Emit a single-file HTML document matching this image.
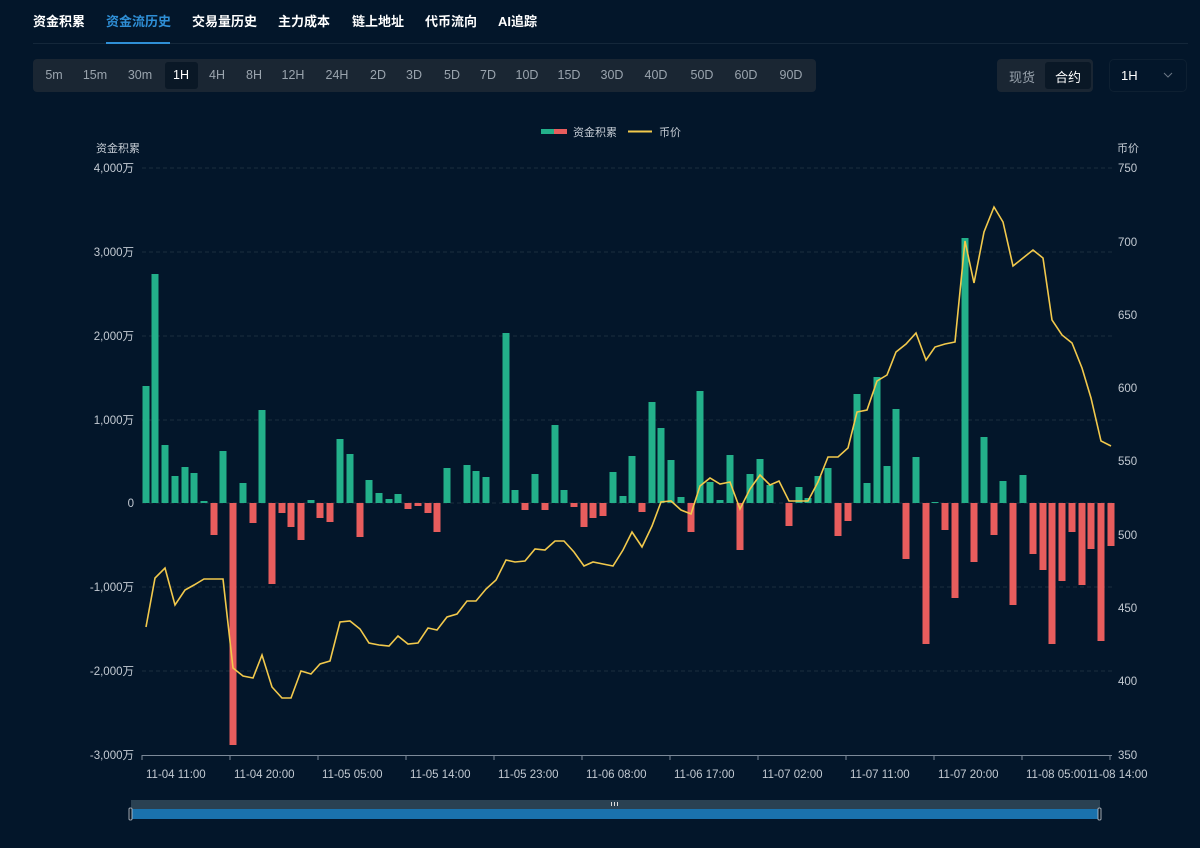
<!DOCTYPE html><html><head><meta charset="utf-8"><style>
body{margin:0;width:1200px;height:848px;background:#03162a;font-family:"Liberation Sans","Noto Sans CJK SC",sans-serif;overflow:hidden;position:relative;color:#c9d1d9}
.a{position:absolute;white-space:nowrap}
.tab{top:11px;font-size:13px;font-weight:bold;color:#fff}
.tf{top:68px;font-size:12.5px;color:#9aa4ae;transform:translateX(-50%)}
</style></head><body>
<div class="a tab" style="left:33px">资金积累</div>
<div class="a tab" style="left:106px;color:#2f8fd6">资金流历史</div>
<div class="a tab" style="left:192px">交易量历史</div>
<div class="a tab" style="left:278px">主力成本</div>
<div class="a tab" style="left:352px">链上地址</div>
<div class="a tab" style="left:425px">代币流向</div>
<div class="a tab" style="left:498px">AI追踪</div>
<div class="a" style="left:33px;top:43px;width:1155px;height:1px;background:#14273a"></div>
<div class="a" style="left:106px;top:42px;width:64px;height:2px;background:#2f8fd6"></div>
<div class="a" style="left:33px;top:59px;width:783px;height:33px;background:#1a2633;border-radius:4px"></div>
<div class="a" style="left:165px;top:62px;width:33px;height:27px;background:#0a1826;border-radius:3px"></div>
<div id="tfs"></div>
<div class="a" style="left:997px;top:59px;width:96px;height:33px;background:#1a2633;border-radius:4px"></div>
<div class="a" style="left:1045px;top:62px;width:46px;height:27px;background:#0a1826;border-radius:3px"></div>
<div class="a" style="left:1009px;top:67px;font-size:13px;color:#9aa4ae">现货</div>
<div class="a" style="left:1055px;top:67px;font-size:13px;color:#fff">合约</div>
<div class="a" style="left:1109px;top:59px;width:78px;height:33px;border:1px solid #0e2032;border-radius:5px;box-sizing:border-box"></div>
<div class="a" style="left:1121px;top:68px;font-size:13px;color:#fff">1H</div>
<svg class="a" style="left:1163px;top:72px" width="10" height="6"><path d="M1 1L5 5L9 1" stroke="#6b7785" fill="none"/></svg>
<svg id="c" class="a" style="left:0;top:0" width="1200" height="848"></svg>
<script>
var tf=[["5m",54],["15m",95],["30m",140],["1H",181],["4H",217],["8H",254],["12H",293],["24H",337],["2D",378],["3D",414],["5D",452],["7D",488],["10D",527],["15D",569],["30D",612],["40D",656],["50D",702],["60D",746],["90D",791]];
var h="";tf.forEach(function(t){h+='<div class="a tf" style="left:'+t[1]+'px;'+(t[0]=="1H"?'color:#fff':'')+'">'+t[0]+'</div>'});
document.getElementById("tfs").innerHTML=h;
var s="";
var ly=[[168,"4,000万"],[252,"3,000万"],[336,"2,000万"],[420,"1,000万"],[503,"0"],[587,"-1,000万"],[671,"-2,000万"],[755,"-3,000万"]];
var ry=[[168,750],[242,700],[315,650],[388,600],[461,550],[535,500],[608,450],[681,400],[755,350]];
ly.forEach(function(l){if(l[0]!=755)s+='<line x1="142" x2="1112" y1="'+l[0]+'" y2="'+l[0]+'" stroke="#1b2d3e" stroke-dasharray="4,3"/>';s+='<text x="134" y="'+(l[0]+4)+'" fill="#c3cad2" font-size="11.5" text-anchor="end">'+l[1]+'</text>'});
ry.forEach(function(l){s+='<text x="1118" y="'+(l[0]+4)+'" fill="#c3cad2" font-size="11.5">'+l[1]+'</text>'});
s+='<text x="96" y="152" fill="#c3cad2" font-size="11">资金积累</text><text x="1117" y="152" fill="#c3cad2" font-size="11">币价</text>';
s+='<rect x="541" y="129" width="13" height="5" fill="#23b08a"/><rect x="554" y="129" width="13" height="5" fill="#e85d5d"/><text x="573" y="136" fill="#c3cad2" font-size="11">资金积累</text>';
s+='<line x1="628" x2="652" y1="131.5" y2="131.5" stroke="#f2c94c" stroke-width="2"/><text x="659" y="136" fill="#c3cad2" font-size="11">币价</text>';
var b=[[146,386],[155,274],[165,445],[175,476],[185,467],[194,473],[204,501],[214,535],[223,451],[233,745],[243,483],[253,523],[262,410],[272,584],[282,513],[291,527],[301,540],[311,500],[320,518],[330,522],[340,439],[350,454],[360,537],[369,480],[379,493],[389,499],[398,494],[408,509],[418,506],[428,513],[437,532],[447,468],[467,465],[476,471],[486,477],[506,333],[515,490],[525,510],[535,474],[545,510],[555,425],[564,490],[574,507],[584,527],[593,518],[603,516],[613,472],[623,496],[632,456],[642,512],[652,402],[661,428],[671,460],[681,497],[691,532],[700,391],[710,482],[720,500],[730,455],[740,550],[750,474],[760,459],[770,485],[789,526],[799,487],[808,498],[818,476],[828,468],[838,536],[848,521],[857,394],[867,483],[877,377],[887,466],[896,409],[906,559],[916,457],[926,644],[935,502],[945,530],[955,598],[965,238],[974,562],[984,437],[994,535],[1003,481],[1013,605],[1023,475],[1033,554],[1043,570],[1052,644],[1062,581],[1072,532],[1082,585],[1091,549],[1101,641],[1111,546]];
b.forEach(function(p){var t=Math.min(p[1],503),hh=Math.abs(p[1]-503);s+='<rect x="'+(p[0]-3.5)+'" y="'+t+'" width="7" height="'+Math.max(hh,1)+'" fill="'+(p[1]<503?'#23b08a':'#e85d5d')+'"/>'});
var pl="146,627 155,578 165,568 175,605 185,590 194,585 204,579 214,579 223,579 233,668 243,676 253,678 262,655 272,687 282,698 291,698 301,671 311,674 320,664 330,661 340,622 350,621 360,629 369,643 379,645 389,646 398,636 408,644 418,643 428,628 437,630 447,617 457,614 467,601 476,601 486,589 496,580 506,560 515,562 525,561 535,549 545,550 555,541 564,541 574,552 584,566 593,562 603,564 613,566 623,550 632,532 642,547 652,526 661,502 671,501 681,510 691,514 700,486 710,478 720,484 730,482 740,509 750,489 760,475 770,485 779,481 789,501 799,501 808,501 818,482 828,457 838,457 848,448 857,412 867,410 877,381 887,375 896,352 906,344 916,333 926,360 935,347 945,344 955,342 965,241 974,283 984,232 994,207 1003,222 1013,266 1023,258 1033,250 1043,258 1052,320 1062,335 1072,343 1082,368 1091,398 1101,441 1111,446";
s+='<polyline points="'+pl+'" fill="none" stroke="#f2c94c" stroke-width="1.6"/>';
s+='<line x1="142" x2="1112" y1="755.5" y2="755.5" stroke="#7d8a99"/>';
var xl=["11-04 11:00","11-04 20:00","11-05 05:00","11-05 14:00","11-05 23:00","11-06 08:00","11-06 17:00","11-07 02:00","11-07 11:00","11-07 20:00","11-08 05:00","11-08 14:00"];
xl.forEach(function(l,i){var x=142+i*88;s+='<line x1="'+x+'" x2="'+x+'" y1="755" y2="760" stroke="#7d8a99"/>';s+='<text x="'+(i==11?1087:x+4)+'" y="778" fill="#c3cad2" font-size="11.5">'+l+'</text>'});
s+='<rect x="131" y="800" width="969" height="9" fill="#2a4152"/><rect x="131" y="809" width="969" height="10" fill="#1a72ad"/>';
s+='<rect x="129" y="808" width="3" height="12" rx="1" fill="#0a1826" stroke="#c3cad2" stroke-width=".8"/><rect x="1098" y="808" width="3" height="12" rx="1" fill="#0a1826" stroke="#c3cad2" stroke-width=".8"/>';
s+='<rect x="611" y="802" width="1" height="4" fill="#ddd"/><rect x="614" y="802" width="1" height="4" fill="#ddd"/><rect x="617" y="802" width="1" height="4" fill="#ddd"/>';
document.getElementById("c").innerHTML=s;
</script>
</body></html>
